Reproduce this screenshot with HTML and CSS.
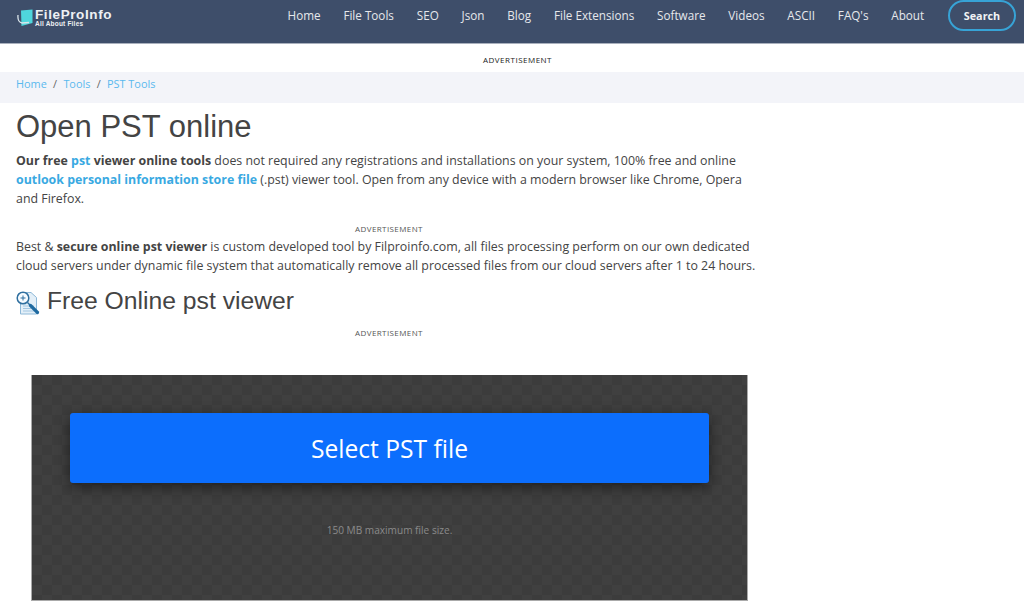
FILE: index.html
```html
<!DOCTYPE html>
<html lang="en">
<head>
<meta charset="UTF-8">
<title>Open PST online</title>
<link rel="stylesheet" href="styles.css">
</head>
<body>
  <header class="navbar">
    <a class="logo" href="#">
      <svg class="logo-icon" width="16" height="18" viewBox="0 0 16 18">
        <path d="M4 1.500 L15.500 0.500 V14 L4.500 17 Z" fill="#4fd6dc"/>
        <path d="M1 6 C0.500 11 1.500 13.500 5 14 L12 13.500" fill="none" stroke="#d9e4ea" stroke-width="1.300"/>
      </svg>
      <span class="logo-text">
        <span class="logo-name">FileProInfo</span>
        <span class="logo-tag">All About Files</span>
      </span>
    </a>
    <nav class="nav-links">
      <a href="#">Home</a>
      <a href="#">File Tools</a>
      <a href="#">SEO</a>
      <a href="#">Json</a>
      <a href="#">Blog</a>
      <a href="#">File Extensions</a>
      <a href="#">Software</a>
      <a href="#">Videos</a>
      <a href="#">ASCII</a>
      <a href="#">FAQ's</a>
      <a href="#">About</a>
      <a class="search-btn" href="#">Search</a>
    </nav>
  </header>

  <div class="top-ad">ADVERTISEMENT</div>

  <div class="breadcrumb">
    <a href="#">Home</a><span>/</span><a href="#">Tools</a><span>/</span><a href="#">PST Tools</a>
  </div>

  <main class="content">
    <h1>Open PST online</h1>
    <p><b>Our free <a href="#">pst</a> viewer online tools</b> does not required any registrations and installations on your system, 100% free and online <b><a href="#">outlook personal information store file</a></b> (.pst) viewer tool. Open from any device with a modern browser like Chrome, Opera and Firefox.</p>
    <div class="ad-label first">ADVERTISEMENT</div>
    <p>Best &amp; <b>secure online pst viewer</b> is custom developed tool by Filproinfo.com, all files processing perform on our own dedicated cloud servers under dynamic file system that automatically remove all processed files from our cloud servers after 1 to 24 hours.</p>
    <h2>
      <svg class="h2-icon" width="24" height="26" viewBox="0 0 24 26">
        <path d="M4.500 2.500 H15 L20.500 7.500 V24 H4.500 Z" fill="#e3eff8" stroke="#8db8d8" stroke-width="1"/>
        <path d="M7 16 H18 M7 18.500 H15 M7 21 H18" stroke="#a3c7e2" stroke-width="1"/>
        <circle cx="7" cy="8" r="5.800" fill="#f6fbff" stroke="#2f6f9f" stroke-width="1.500"/>
        <path d="M4.500 8 H9.500 M7 5.500 V10.500" stroke="#2f6f9f" stroke-width="1"/>
        <path d="M11.500 12.500 L14 15" stroke="#2f6f9f" stroke-width="1.500"/>
        <path d="M14.500 15.500 L21.500 22.500" stroke="#1f6aa0" stroke-width="3.200" stroke-linecap="round"/>
      </svg>
      Free Online pst viewer
    </h2>
    <div class="ad-label second">ADVERTISEMENT</div>
    <section class="upload-box">
      <button class="select-btn" type="button">Select PST file</button>
      <div class="max-size">150 MB maximum file size.</div>
    </section>
  </main>
</body>
</html>
```

FILE: styles.css
```css
html, body {
  height: 607px;
  overflow: hidden;
}

body {
  margin: 0;
  font-family: "Open Sans", sans-serif;
  font-size: 12.380px;
  line-height: 19px;
  color: #444;
  background-color: #fff;
}

a {
  text-decoration: none;
}

.navbar {
  height: 43px;
  background-color: #3e4e6a;
  border-bottom: 1px solid #a9b0bd;
  display: flex;
  justify-content: space-between;
  align-items: flex-start;
  padding: 0 8px 0 17px;
}

.logo {
  display: flex;
  align-items: flex-start;
  gap: 2px;
  margin-top: 9px;
  color: #eef1f4;
}

.logo-icon {
  display: block;
}

.logo-text {
  display: flex;
  flex-direction: column;
  font-family: "Liberation Sans", sans-serif;
  font-weight: bold;
}

.logo-name {
  font-size: 13.500px;
  line-height: 12px;
  letter-spacing: 0.6px;
}

.logo-tag {
  font-size: 6.500px;
  line-height: 6px;
  letter-spacing: 0.2px;
}

.nav-links {
  display: flex;
  align-items: center;
  gap: 22.800px;
  font-size: 11.700px;
}

.nav-links a {
  color: #e6e8ec;
}

.nav-links .search-btn {
  width: 64px;
  height: 27px;
  margin-left: 1px;
  border: 2px solid #37a3d6;
  border-radius: 16px;
  display: flex;
  justify-content: center;
  align-items: center;
  color: #f1f3f5;
  font-size: 10.800px;
  font-weight: bold;
}

.top-ad {
  height: 28px;
  text-align: center;
  font-size: 8px;
  line-height: 32px;
  letter-spacing: 0.5px;
  color: #222;
  padding-left: 11px;
  box-sizing: border-box;
}

.breadcrumb {
  height: 31px;
  background-color: #f3f4f9;
  display: flex;
  align-items: center;
  padding: 0 0 9px 16px;
  box-sizing: border-box;
  gap: 6.300px;
  font-size: 10.900px;
  color: #666;
}

.breadcrumb a {
  color: #5ab9ee;
}

.content a {
  color: #39a9e2;
}

.content {
  width: 746px;
  padding-left: 16px;
}

h1 {
  margin: 0;
  font-family: "Liberation Sans", sans-serif;
  font-size: 31px;
  font-weight: normal;
  line-height: 48px;
}

p {
  margin: 0;
}

.ad-label {
  font-size: 8px;
  letter-spacing: 0.4px;
  text-align: center;
  color: #555;
}

.ad-label.first {
  margin-top: 12px;
  line-height: 17px;
}

h2 {
  margin: 8px 0 0;
  display: flex;
  align-items: center;
  gap: 7px;
  font-family: "Liberation Sans", sans-serif;
  font-size: 24.700px;
  font-weight: normal;
  line-height: 36px;
}

.h2-icon {
  margin-top: 4px;
}

.ad-label.second {
  margin-top: 6px;
  line-height: 16px;
}

.upload-box {
  margin: 34px 0 0 15px;
  width: 717px;
  height: 226px;
  box-sizing: border-box;
  padding-top: 38px;
  border-left: 1px solid #aaa;
  border-right: 1px solid #aaa;
  border-bottom: 1px solid #aaa;
  background-color: #3c3c3c;
  background-image:
    linear-gradient(45deg, #404040 25%, transparent 25%, transparent 75%, #404040 75%),
    linear-gradient(45deg, #404040 25%, transparent 25%, transparent 75%, #404040 75%);
  background-size: 20px 20px;
  background-position: 0 0, 10px 10px;
  text-align: center;
}

.select-btn {
  display: block;
  width: 639px;
  height: 70px;
  margin: 0 0 0 38px;
  border: none;
  border-radius: 3px;
  background-color: #0c6efd;
  box-shadow: 0 4px 14px rgba(0, 0, 0, 0.5);
  color: #fff;
  font-family: "Open Sans", sans-serif;
  font-size: 24.600px;
}

.max-size {
  margin-top: 38px;
  font-size: 10.100px;
  color: #8a8a8a;
}
```
